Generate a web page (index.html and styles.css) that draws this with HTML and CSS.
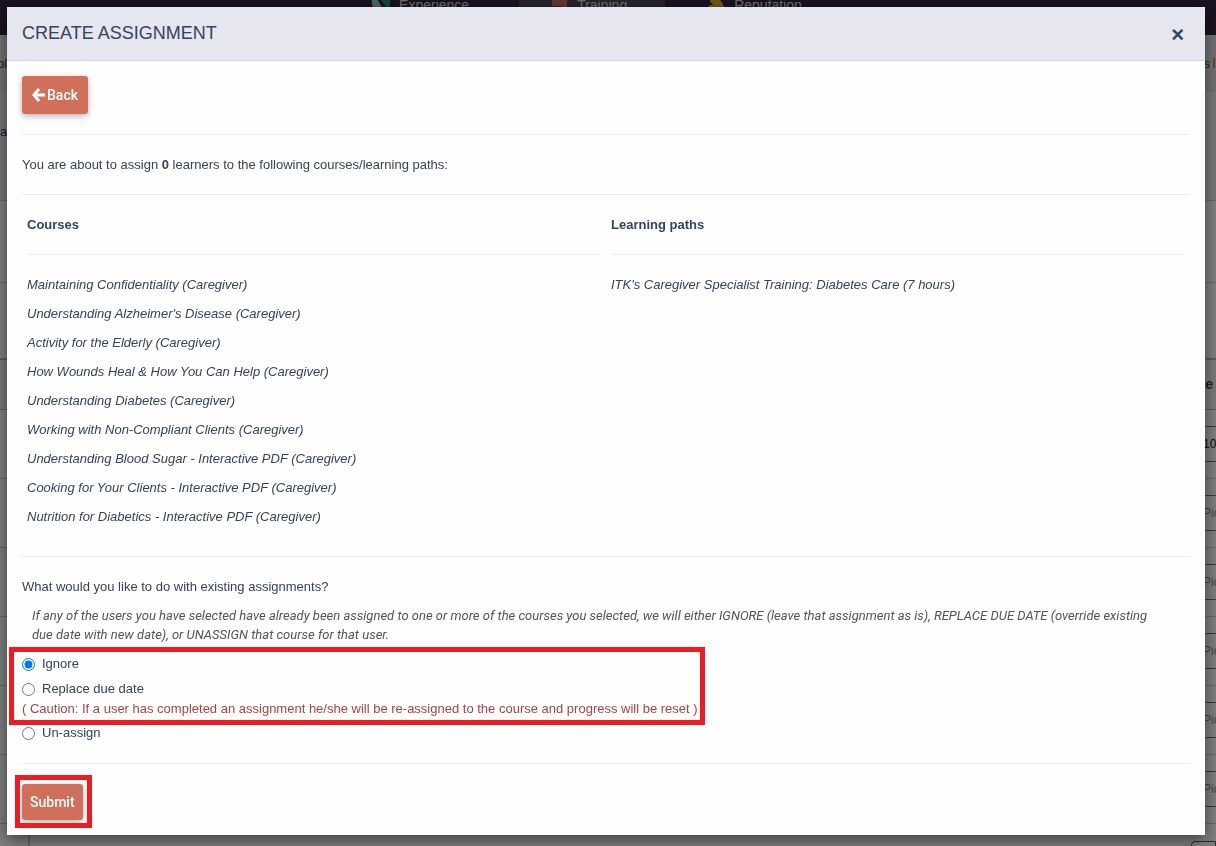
FILE: index.html
```html
<!doctype html>
<html lang="en">
    <head>
        <meta charset="utf-8">
        <title>Create assignment</title>
        <meta name="viewport" content="width=device-width, initial-scale=1">
        <link rel="stylesheet" href="styles.css">
    </head>
    <body>
        <div class="page" aria-hidden="true">
            <nav class="nav">
                <span class="tab">
                    <svg width="20" height="20" viewBox="0 0 20 20"><path d="M1 5h5l8 13H8C3 17 0 12 1 5z" fill="#9bcfc0"/><path d="M8 3h11v9c0 2-1 3-2 4z" fill="#2a8a76"/></svg>
                    Experience
                </span>
                <span class="tab active">
                    <svg width="20" height="20" viewBox="0 0 20 20"><path d="M3 2h15v15h-5v-5H3z" fill="#c4705c"/></svg>
                    Training
                </span>
                <span class="tab">
                    <svg width="20" height="20" viewBox="0 0 20 20"><path d="M4 2a14 14 0 0 1 14 11H2l2-2h3a6 6 0 0 0-3-3z" fill="#e0ac30"/></svg>
                    Reputation
                </span>
            </nav>
            <div class="subnav"><span>ol</span><span class="end">s <i></i></span></div>
            <div class="summary">a</div>
            <div class="filters"></div>
            <div class="filters second"></div>
            <div class="grid-head">e</div>
            <div class="grid-row"><span class="date dark">10/</span></div>
            <div class="grid-row"><span class="date">Pick</span></div>
            <div class="grid-row"><span class="date">Pick</span></div>
            <div class="grid-row"><span class="date">Pick</span></div>
            <div class="grid-row"><span class="date">Pick</span></div>
            <div class="grid-row"><span class="date">Pick</span></div>
            <div class="grid-foot"><span></span></div>
        </div>

        <div class="backdrop"></div>

        <div class="modal" role="dialog" aria-labelledby="modal-title">
            <header class="modal-header">
                <h1 id="modal-title">CREATE ASSIGNMENT</h1>
                <button class="close" type="button" aria-label="Close">×</button>
            </header>
            <form class="modal-body">
                <button class="btn back" type="button">
                    <svg width="13" height="14" viewBox="0 0 13 14"><path d="M7 1L2 7l5 6M2.500 7H13" fill="none" stroke="#fff" stroke-width="3"/></svg>
                    Back
                </button>
                <hr>
                <p>You are about to assign <b>0</b> learners to the following courses/learning paths:</p>
                <hr>
                <div class="columns">
                    <section>
                        <h2>Courses</h2>
                        <hr>
                        <ul>
                            <li>Maintaining Confidentiality (Caregiver)</li>
                            <li>Understanding Alzheimer's Disease (Caregiver)</li>
                            <li>Activity for the Elderly (Caregiver)</li>
                            <li>How Wounds Heal &amp; How You Can Help (Caregiver)</li>
                            <li>Understanding Diabetes (Caregiver)</li>
                            <li>Working with Non-Compliant Clients (Caregiver)</li>
                            <li>Understanding Blood Sugar - Interactive PDF (Caregiver)</li>
                            <li>Cooking for Your Clients - Interactive PDF (Caregiver)</li>
                            <li>Nutrition for Diabetics - Interactive PDF (Caregiver)</li>
                        </ul>
                    </section>
                    <section>
                        <h2>Learning paths</h2>
                        <hr>
                        <ul>
                            <li>ITK's Caregiver Specialist Training: Diabetes Care (7 hours)</li>
                        </ul>
                    </section>
                </div>
                <hr>
                <p>What would you like to do with existing assignments?</p>
                <p class="hint">If any of the users you have selected have already been assigned to one or more of the courses you selected, we will either IGNORE (leave that assignment as is), REPLACE DUE DATE (override existing due date with new date), or UNASSIGN that course for that user.</p>
                <div class="marked choices">
                    <label class="choice"><input type="radio" name="existing" value="ignore" checked>Ignore</label>
                    <label class="choice"><input type="radio" name="existing" value="replace">Replace due date</label>
                    <p class="caution">( Caution: If a user has completed an assignment he/she will be re-assigned to the course and progress will be reset )</p>
                </div>
                <label class="choice"><input type="radio" name="existing" value="unassign">Un-assign</label>
                <hr>
                <div class="marked submit">
                    <button class="btn" type="submit">Submit</button>
                </div>
            </form>
        </div>
    </body>
</html>
```
FILE: styles.css
```css
* {
    box-sizing: border-box;
}

body {
    margin: 0;
    min-height: 100vh;
    background: #fff;
    color: #34435e;
    font: 13px/19px "Liberation Sans", Arial, sans-serif;
}

h1, h2, p, ul {
    margin: 0;
    padding: 0;
}

/* page under the dialog */
.page {
    height: 100vh;
    overflow: hidden;
}

.nav {
    display: flex;
    justify-content: center;
    height: 35px;
    padding-right: 23px;
    background: #362444;
    color: #ddd;
    font-size: 14px;
}

.tab {
    display: flex;
    align-items: flex-start;
    gap: 8px;
    padding: 0 50px 0 30px;
    line-height: 10px;
}

.tab svg {
    margin-top: -6px;
}

.tab.active {
    padding-right: 38px;
    background: #50465c;
}

.tab:last-child {
    padding-left: 41px;
}

.subnav {
    display: flex;
    justify-content: space-between;
    align-items: center;
    height: 57px;
    padding-right: 1px;
    background: #e4e4e8;
}

.subnav span {
    margin-left: -3px;
}

.subnav .end {
    display: flex;
    gap: 3px;
}

.subnav i {
    width: 2px;
    height: 10px;
    margin-top: 4px;
    background: #d0905a;
}

.summary {
    height: 109px;
    padding-top: 30px;
    border-bottom: 1px solid #ccc;
    background: #eff0f3;
}

.filters {
    height: 82px;
    border-bottom: 1px solid #ccc;
}

.filters.second {
    height: 77px;
    border-bottom: 2px solid #bbb;
}

.grid-head {
    height: 50px;
    padding: 15px 3px;
    border-bottom: 1px solid #bbb;
    background: #f4f4f5;
    font-size: 14px;
    font-weight: bold;
    text-align: right;
}

.grid-row {
    display: flex;
    justify-content: flex-end;
    height: 69px;
    padding: 16px 0;
    border-bottom: 1px solid #ccc;
}

.date {
    width: 20px;
    padding: 8px 0 8px 7px;
    border-top: 1px solid #777;
    border-bottom: 1px solid #777;
    color: #888;
    font-size: 12px;
    overflow: hidden;
}

.date.dark {
    color: #222;
}

.grid-foot {
    display: flex;
    justify-content: flex-end;
    height: 40px;
    margin-left: 28px;
    padding-top: 17px;
    border-left: 2px solid #ccc;
}

.grid-foot span {
    width: 25px;
    border: 1px solid #555;
    border-radius: 4px 0 0 0;
}

.backdrop {
    position: fixed;
    inset: 0;
    background: rgba(0, 0, 0, .5);
}

/* dialog */
.modal {
    position: absolute;
    top: 7px;
    left: 7px;
    right: 11px;
    background: #fefefe;
    box-shadow: 0 5px 15px rgba(0, 0, 0, .5);
}

.modal-header {
    display: flex;
    justify-content: space-between;
    padding: 15px;
    border-bottom: 1px solid #d5d5d9;
    background: #e6e6f0;
}

.modal-header h1 {
    font-size: 18px;
    font-weight: normal;
    line-height: 23px;
}

.close {
    padding: 3px 6px 0;
    border: none;
    background: none;
    color: #34435e;
    font: bold 22px/20px "Liberation Sans", Arial, sans-serif;
    cursor: pointer;
}

.modal-body {
    padding: 15px;
}

hr {
    margin: 20px 0;
    border: none;
    border-top: 1px solid #eee;
}

.btn {
    display: flex;
    align-items: center;
    gap: 2px;
    height: 36px;
    padding: 0 8px;
    border: none;
    border-radius: 3px;
    background: #d0705a;
    box-shadow: 0 2px 6px rgba(0, 0, 0, .3);
    color: #fff;
    font: 500 14px/20px Roboto, Arial, sans-serif;
    cursor: pointer;
}

.btn:hover {
    background: #c0624d;
}

.btn.back {
    height: 38px;
    padding: 0 10px;
}

.columns {
    display: grid;
    grid-template-columns: 1fr 1fr;
    gap: 10px;
    padding: 0 5px;
}

.columns h2 {
    font-size: 13px;
    line-height: 19px;
}

.columns li {
    margin-bottom: 10px;
    list-style: none;
    font-style: italic;
}

.hint {
    padding: 10px 25px 10px 10px;
    color: #555;
    font-family: Roboto, Arial, sans-serif;
    font-style: italic;
}

.choice {
    display: flex;
    gap: 7px;
    height: 20px;
}

.choice input {
    width: 13px;
    height: 13px;
    margin: 4px 0 0;
}

.choices .choice {
    margin-bottom: 5px;
}

.choices .choice:nth-child(2) {
    margin-bottom: 0;
}

.caution {
    margin-bottom: 5px;
    color: #a94442;
}

/* red outlines round the steps to follow */
.marked {
    position: relative;
    width: fit-content;
}

.marked::after {
    content: "";
    position: absolute;
    border: 5px solid #ed1c24;
    pointer-events: none;
}

.choices::after {
    inset: -7px -7px -7px -13px;
}

.submit::after {
    inset: -9px -9px -8px -7px;
}
```
